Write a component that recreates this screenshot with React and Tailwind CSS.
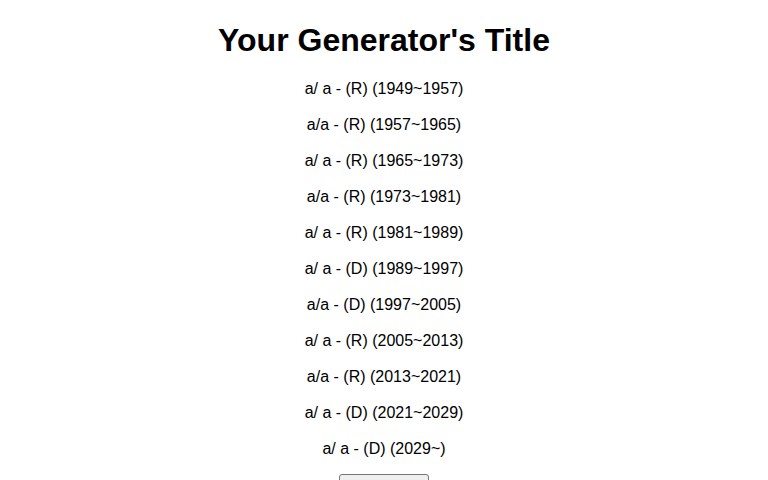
const entries = [
  "a/ a - (R) (1949~1957)",
  "a/a - (R) (1957~1965)",
  "a/ a - (R) (1965~1973)",
  "a/a - (R) (1973~1981)",
  "a/ a - (R) (1981~1989)",
  "a/ a - (D) (1989~1997)",
  "a/a - (D) (1997~2005)",
  "a/ a - (R) (2005~2013)",
  "a/a - (R) (2013~2021)",
  "a/ a - (D) (2021~2029)",
  "a/ a - (D) (2029~)",
];

// Generator page
const App = () => {
  return (
    <div className="min-h-screen bg-white text-black font-['Liberation_Sans',Arial,sans-serif] flex flex-col items-center pt-[22px]">
      <h1 className="text-[32px] font-bold leading-[37px]">
        Your Generator's Title
      </h1>

      <ul className="mt-[12px] flex flex-col items-center">
        {entries.map((entry, i) => (
          <li key={i} className="text-base leading-[36px] h-[36px]">
            {entry}
          </li>
        ))}
      </ul>

      <button className="mt-[7px] w-[90px] h-[22px] border border-[#767676] rounded-[3px] bg-[#efefef] text-[13.33px] leading-[15px] pt-[2px] flex items-start justify-center">
        Generate
      </button>
    </div>
  );
};

export default App;
